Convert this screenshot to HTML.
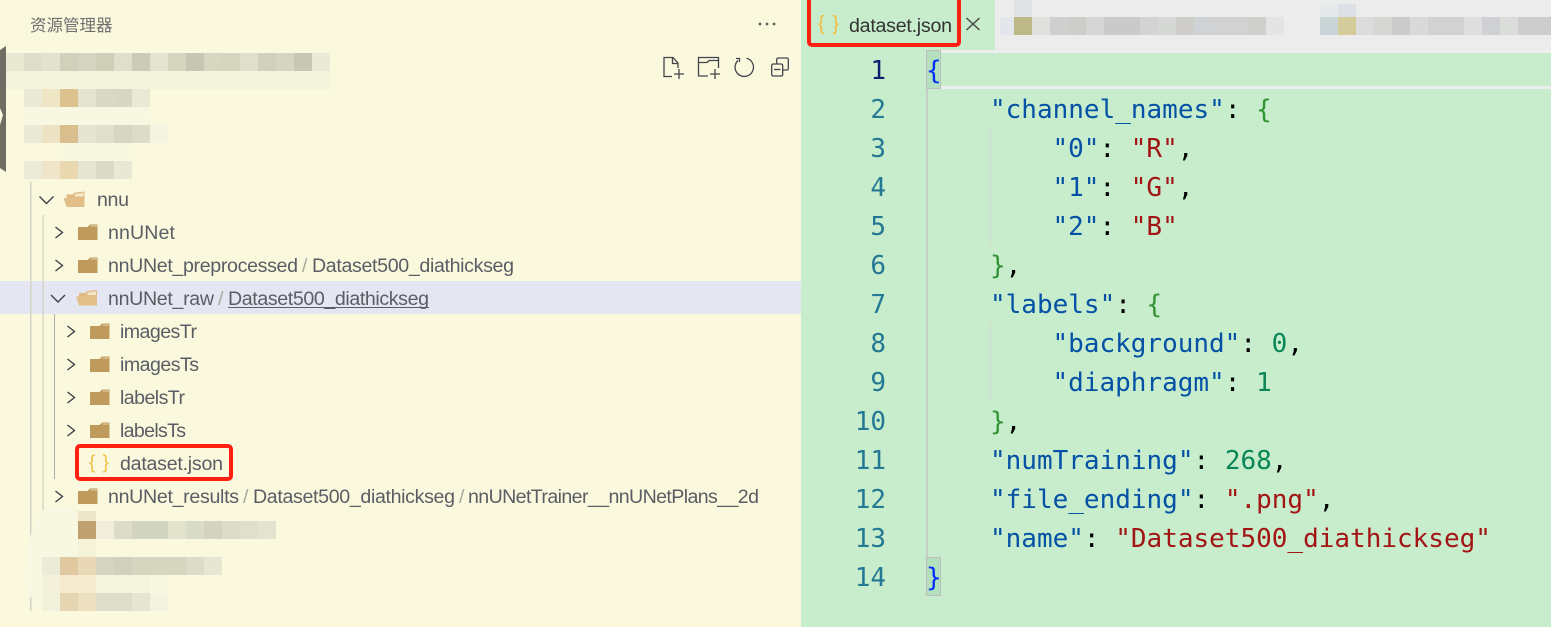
<!DOCTYPE html>
<html><head><meta charset="utf-8"><style>
html,body{margin:0;padding:0;background:#FAF9DE;width:1551px;height:627px;overflow:hidden}
svg{display:block}
.s{font-family:"Liberation Sans","Noto Sans CJK SC",sans-serif;font-size:19.6px;fill:#5a5e64}
.sl{fill:#a9a99c}
.m{font-family:"DejaVu Sans Mono","Liberation Mono",monospace;font-size:26px}
.k{fill:#0451a5}.v{fill:#a31515}.n{fill:#098658}.p{fill:#000}.g{fill:#319331}.b{fill:#0431fa}
.ln{fill:#237893;text-anchor:end}
</style></head><body>
<svg width="1551" height="627" viewBox="0 0 1551 627" xmlns="http://www.w3.org/2000/svg">
<defs>
<g id="fc"><path d="M0 3H9.5L12 0.5H19.5V16H0Z" fill="#bf9a5c"/><path d="M12.5 1.5H19V2.5H12.5Z" fill="#e6d3ae"/></g>
<g id="fo"><path d="M3 3H9L11.5 1L21 0V15.5H3Z" fill="#e0bc84"/><path d="M11.5 2.5L20 1.5V5H11.5Z" fill="#f4e8cc"/><path d="M0 6.5H21V15.5H3Z" fill="#e2bf88"/></g>
<path id="cr" d="M0 0L7 5.5L0 11" fill="none" stroke="#3d4148" stroke-width="1.4"/>
<path id="cd" d="M0 0L7 7L14 0" fill="none" stroke="#3d4148" stroke-width="1.4"/>
</defs>

<!-- sidebar -->
<rect width="801" height="627" fill="#FAF9DE"/>
<rect x="0" y="281" width="801" height="33" fill="#E4E6F1"/>
<text x="30" y="31" font-family="'Liberation Sans','Noto Sans CJK SC',sans-serif" font-size="16.5" fill="#6f6f6f">资源管理器</text>
<g fill="#5f5f5f"><circle cx="760" cy="24" r="1.4"/><circle cx="767" cy="24" r="1.4"/><circle cx="774" cy="24" r="1.4"/></g>

<!-- toolbar icons -->
<g fill="none" stroke="#42444c" stroke-width="1.3">
<path d="M672 76.5H664V57.5H673L678 63V68M672.5 57.5V63.5H678"/>
<path d="M679 69V79M674 74H684"/>
<path d="M708 76H698.5V57.5H718.5V68M698.5 62.5H707L709 60.5H718.5"/>
<path d="M715 69V79M710 74H720"/>
<path d="M738 60.5A9.2 9.2 0 1 0 746.5 58.3"/>
<path d="M736 58.5H739.5V62"/>
<rect x="771.7" y="64" width="11" height="12" rx="1.5"/>
<path d="M776.7 64V59.5A1.5 1.5 0 0 1 778.2 58H786.8A1.5 1.5 0 0 1 788.3 59.5V68.5A1.5 1.5 0 0 1 786.8 70H782.7"/>
<path d="M774 69.5H780.5"/>
</g>

<!-- mosaic top -->
<g>
<rect x="6" y="71" width="324" height="18" fill="#f4f3dd"/>
<rect x="6" y="53" width="18" height="18" fill="#e9e8d3"/><rect x="24" y="53" width="18" height="18" fill="#dedecb"/><rect x="42" y="53" width="18" height="18" fill="#e2e2cf"/><rect x="60" y="53" width="18" height="18" fill="#d1d0bb"/><rect x="78" y="53" width="18" height="18" fill="#d5d4c0"/><rect x="96" y="53" width="18" height="18" fill="#cfceb9"/><rect x="114" y="53" width="18" height="18" fill="#dfdfcc"/><rect x="132" y="53" width="18" height="18" fill="#cbcbb8"/><rect x="150" y="53" width="18" height="18" fill="#e3e3cf"/><rect x="168" y="53" width="18" height="18" fill="#d6d5c0"/><rect x="186" y="53" width="18" height="18" fill="#c5c6b4"/><rect x="204" y="53" width="18" height="18" fill="#d7d6c1"/><rect x="222" y="53" width="18" height="18" fill="#d4d4bf"/><rect x="240" y="53" width="18" height="18" fill="#e0dfcb"/><rect x="258" y="53" width="18" height="18" fill="#d0d0bc"/><rect x="276" y="53" width="18" height="18" fill="#d5d5c1"/><rect x="294" y="53" width="18" height="18" fill="#c8c7b5"/><rect x="312" y="53" width="18" height="18" fill="#ebead6"/>
<rect x="24" y="89" width="18" height="18" fill="#ebead6"/><rect x="42" y="89" width="18" height="18" fill="#efe6c5"/><rect x="60" y="89" width="18" height="18" fill="#dcc28f"/><rect x="78" y="89" width="18" height="18" fill="#e3e3cf"/><rect x="96" y="89" width="18" height="18" fill="#dad9c5"/><rect x="114" y="89" width="18" height="18" fill="#d8d7c3"/><rect x="132" y="89" width="18" height="18" fill="#e9e9d5"/>
<rect x="24" y="107" width="126" height="18" fill="#f8f7e1"/>
<rect x="24" y="125" width="18" height="18" fill="#ebead6"/><rect x="42" y="125" width="18" height="18" fill="#ede2c3"/><rect x="60" y="125" width="18" height="18" fill="#d9bf8e"/><rect x="78" y="125" width="18" height="18" fill="#e4e4d0"/><rect x="96" y="125" width="18" height="18" fill="#dfdfcb"/><rect x="114" y="125" width="18" height="18" fill="#d7d6c2"/><rect x="132" y="125" width="18" height="18" fill="#dddcc8"/><rect x="150" y="125" width="18" height="18" fill="#f5f4e1"/>
<rect x="60" y="143" width="72" height="18" fill="#f8f7e0"/>
<rect x="24" y="161" width="18" height="18" fill="#ecebd8"/><rect x="42" y="161" width="18" height="18" fill="#f0e5c9"/><rect x="60" y="161" width="18" height="18" fill="#ead9b0"/><rect x="78" y="161" width="18" height="18" fill="#e5e5d1"/><rect x="96" y="161" width="18" height="18" fill="#dbdac6"/><rect x="114" y="161" width="18" height="18" fill="#e8e9d5"/>
<path d="M0 50L6 46V172L0 168V125L3 115L0 108Z" fill="#6f6e64"/>
</g>

<!-- tree guides -->
<rect x="30" y="182" width="1.5" height="429" fill="#d4d4c4"/>
<rect x="42.5" y="215" width="1.2" height="305" fill="#cfcfc0"/>
<rect x="54" y="314" width="1" height="165" fill="#aeaea6"/>

<!-- mosaic bottom -->
<path d="M42 511Q60 505 78 510H96V521H276V539H96V557H222V575H168V611H60Q25 610 26 575Q27 530 42 511Z" fill="#f8f7e2"/>
<rect x="78" y="511" width="18" height="10" fill="#eee6c9"/>
<rect x="78" y="521" width="18" height="18" fill="#bfa070"/><rect x="96" y="521" width="18" height="18" fill="#f0eeda"/><rect x="114" y="521" width="18" height="18" fill="#dcdcc8"/><rect x="132" y="521" width="36" height="18" fill="#d0d4c0"/><rect x="168" y="521" width="18" height="18" fill="#e3e3cd"/><rect x="186" y="521" width="18" height="18" fill="#d9dcc8"/><rect x="204" y="521" width="18" height="18" fill="#d3d3bf"/><rect x="222" y="521" width="18" height="18" fill="#dcdcc8"/><rect x="240" y="521" width="18" height="18" fill="#dfdfcb"/><rect x="258" y="521" width="18" height="18" fill="#e3e3cf"/>
<rect x="78" y="539" width="18" height="18" fill="#f5f2da"/>
<rect x="42" y="557" width="18" height="18" fill="#ebebd7"/><rect x="60" y="557" width="18" height="18" fill="#e0c8a0"/><rect x="78" y="557" width="18" height="18" fill="#e8d8b5"/><rect x="96" y="557" width="18" height="18" fill="#d5d5c2"/><rect x="114" y="557" width="18" height="18" fill="#d0d0bc"/><rect x="132" y="557" width="54" height="18" fill="#d5d5c0"/><rect x="186" y="557" width="18" height="18" fill="#dcdcc8"/><rect x="204" y="557" width="18" height="18" fill="#e6e6d2"/>
<rect x="42" y="575" width="18" height="18" fill="#f3f1dc"/><rect x="60" y="575" width="36" height="18" fill="#f5ead0"/><rect x="96" y="575" width="54" height="18" fill="#f5f4df"/>
<rect x="42" y="593" width="18" height="18" fill="#f1f1dc"/><rect x="60" y="593" width="18" height="18" fill="#e5d5b0"/><rect x="78" y="593" width="18" height="18" fill="#ede0c0"/><rect x="96" y="593" width="36" height="18" fill="#ddddca"/><rect x="132" y="593" width="18" height="18" fill="#e5e5d1"/><rect x="150" y="593" width="18" height="18" fill="#f3f3df"/>

<!-- tree rows -->
<use href="#cd" x="39.5" y="196.5"/><use href="#fo" x="63.5" y="191.5"/>
<text class="s" x="97" y="206" textLength="32" lengthAdjust="spacing">nnu</text>

<use href="#cr" x="55.5" y="227"/><use href="#fc" x="78" y="224"/>
<text class="s" x="108" y="239" textLength="67" lengthAdjust="spacing">nnUNet</text>

<use href="#cr" x="55.5" y="260"/><use href="#fc" x="78" y="257"/>
<text class="s" x="108" y="272" textLength="190" lengthAdjust="spacing">nnUNet_preprocessed</text>
<text class="s sl" x="302" y="272">/</text>
<text class="s" x="312" y="272" textLength="202" lengthAdjust="spacing">Dataset500_diathickseg</text>

<use href="#cd" x="51" y="295"/><use href="#fo" x="76" y="290"/>
<text class="s" x="108" y="305" textLength="106" lengthAdjust="spacing">nnUNet_raw</text>
<text class="s sl" x="218" y="305">/</text>
<text class="s" x="228" y="305" textLength="201" lengthAdjust="spacing">Dataset500_diathickseg</text>
<rect x="228" y="307" width="201" height="1" fill="#5a5e64"/>

<use href="#cr" x="67.5" y="326"/><use href="#fc" x="90" y="323"/>
<text class="s" x="120" y="338" textLength="77" lengthAdjust="spacing">imagesTr</text>
<use href="#cr" x="67.5" y="359"/><use href="#fc" x="90" y="356"/>
<text class="s" x="120" y="371" textLength="79" lengthAdjust="spacing">imagesTs</text>
<use href="#cr" x="67.5" y="392"/><use href="#fc" x="90" y="389"/>
<text class="s" x="120" y="404" textLength="65" lengthAdjust="spacing">labelsTr</text>
<use href="#cr" x="67.5" y="425"/><use href="#fc" x="90" y="422"/>
<text class="s" x="120" y="437" textLength="66" lengthAdjust="spacing">labelsTs</text>

<text x="89" y="468.5" font-family="'Liberation Sans',sans-serif" font-size="19" fill="#f5bd3f" textLength="20" lengthAdjust="spacing">{ }</text>
<text class="s" x="120" y="470" textLength="103" lengthAdjust="spacing">dataset.json</text>
<rect x="77" y="446" width="154" height="33" rx="3" fill="none" stroke="#ff2012" stroke-width="4"/>

<use href="#cr" x="55.5" y="491"/><use href="#fc" x="78" y="488"/>
<text class="s" x="108" y="503" textLength="131" lengthAdjust="spacing">nnUNet_results</text>
<text class="s sl" x="243" y="503">/</text>
<text class="s" x="253" y="503" textLength="202" lengthAdjust="spacing">Dataset500_diathickseg</text>
<text class="s sl" x="459" y="503">/</text>
<text class="s" x="468" y="503" textLength="291" lengthAdjust="spacing">nnUNetTrainer__nnUNetPlans__2d</text>

<!-- editor -->
<rect x="801" y="0" width="750" height="627" fill="#C7EDCC"/>
<rect x="995" y="0" width="556" height="53" fill="#ececec"/>
<rect x="1014" y="0" width="18" height="17" fill="#dfe3e6"/>
<rect x="1320" y="4" width="18" height="13" fill="#e6e9ea"/><rect x="1338" y="4" width="18" height="13" fill="#dde1e5"/>
<rect x="1000" y="17" width="14" height="18" fill="#e3e6ea"/><rect x="1014" y="17" width="18" height="18" fill="#bcb888"/><rect x="1032" y="17" width="18" height="18" fill="#e0e0dc"/><rect x="1050" y="17" width="18" height="18" fill="#cfcfcf"/><rect x="1068" y="17" width="18" height="18" fill="#cdcdca"/><rect x="1086" y="17" width="18" height="18" fill="#d6d6d6"/><rect x="1104" y="17" width="36" height="18" fill="#cacaca"/><rect x="1140" y="17" width="18" height="18" fill="#d3d3d3"/><rect x="1158" y="17" width="18" height="18" fill="#d6d8d6"/><rect x="1176" y="17" width="18" height="18" fill="#cfcdca"/><rect x="1194" y="17" width="18" height="18" fill="#d0d3d6"/><rect x="1212" y="17" width="36" height="18" fill="#d2d2d2"/><rect x="1248" y="17" width="18" height="18" fill="#cfcfcc"/><rect x="1266" y="17" width="18" height="18" fill="#e4e4e4"/>
<rect x="1320" y="17" width="18" height="18" fill="#c8d4d6"/><rect x="1338" y="17" width="18" height="18" fill="#d5cc9c"/><rect x="1356" y="17" width="18" height="18" fill="#dcdcdc"/><rect x="1374" y="17" width="18" height="18" fill="#d6d6d3"/><rect x="1392" y="17" width="18" height="18" fill="#cbcbcb"/><rect x="1410" y="17" width="18" height="18" fill="#d9d9d9"/><rect x="1428" y="17" width="36" height="18" fill="#d2d2d2"/><rect x="1464" y="17" width="18" height="18" fill="#dedede"/><rect x="1482" y="17" width="18" height="18" fill="#cfd0d4"/><rect x="1500" y="17" width="18" height="18" fill="#dbdddb"/><rect x="1518" y="17" width="33" height="18" fill="#cdcdcd"/>

<text x="818" y="30" font-family="'Liberation Sans',sans-serif" font-size="20" fill="#f5bd3f" textLength="21" lengthAdjust="spacing">{ }</text>
<text x="849" y="32" font-family="'Liberation Sans',sans-serif" font-size="19.6" fill="#333" textLength="103" lengthAdjust="spacing">dataset.json</text>
<path d="M966.5 18L979.5 30M979.5 18L966.5 30" stroke="#444" stroke-width="1.4" fill="none"/>
<rect x="809" y="-4" width="150" height="49" rx="3" fill="none" stroke="#ff2012" stroke-width="4"/>

<!-- current line -->
<rect x="941" y="50" width="610" height="3" fill="#eeeeee"/>
<rect x="941" y="86" width="610" height="3" fill="#eeeeee"/>
<!-- guides -->
<rect x="926" y="89" width="2" height="468" fill="#c4d0c4"/>
<rect x="989.5" y="128" width="1.5" height="117" fill="#d2dcd0"/>
<rect x="989.5" y="323" width="1.5" height="78" fill="#d2dcd0"/>
<!-- bracket boxes -->
<rect x="926.5" y="50.5" width="14" height="38" fill="#b5e0bd" stroke="#bdbdbd"/>
<rect x="926.5" y="557.5" width="14" height="38" fill="#b5e0bd" stroke="#bdbdbd"/>

<!-- line numbers -->
<g class="m">
<text class="ln" x="886" y="79" style="fill:#0b216f">1</text>
<text class="ln" x="886" y="118">2</text>
<text class="ln" x="886" y="157">3</text>
<text class="ln" x="886" y="196">4</text>
<text class="ln" x="886" y="235">5</text>
<text class="ln" x="886" y="274">6</text>
<text class="ln" x="886" y="313">7</text>
<text class="ln" x="886" y="352">8</text>
<text class="ln" x="886" y="391">9</text>
<text class="ln" x="886" y="430">10</text>
<text class="ln" x="886" y="469">11</text>
<text class="ln" x="886" y="508">12</text>
<text class="ln" x="886" y="547">13</text>
<text class="ln" x="886" y="586">14</text>

<!-- code -->
<text x="926" y="79" class="b">{</text>
<text x="990" y="118" xml:space="preserve"><tspan class="k">"channel_names"</tspan><tspan class="p">: </tspan><tspan class="g">{</tspan></text>
<text x="1052.5" y="157" xml:space="preserve"><tspan class="k">"0"</tspan><tspan class="p">: </tspan><tspan class="v">"R"</tspan><tspan class="p">,</tspan></text>
<text x="1052.5" y="196" xml:space="preserve"><tspan class="k">"1"</tspan><tspan class="p">: </tspan><tspan class="v">"G"</tspan><tspan class="p">,</tspan></text>
<text x="1052.5" y="235" xml:space="preserve"><tspan class="k">"2"</tspan><tspan class="p">: </tspan><tspan class="v">"B"</tspan></text>
<text x="990" y="274" xml:space="preserve"><tspan class="g">}</tspan><tspan class="p">,</tspan></text>
<text x="990" y="313" xml:space="preserve"><tspan class="k">"labels"</tspan><tspan class="p">: </tspan><tspan class="g">{</tspan></text>
<text x="1052.5" y="352" xml:space="preserve"><tspan class="k">"background"</tspan><tspan class="p">: </tspan><tspan class="n">0</tspan><tspan class="p">,</tspan></text>
<text x="1052.5" y="391" xml:space="preserve"><tspan class="k">"diaphragm"</tspan><tspan class="p">: </tspan><tspan class="n">1</tspan></text>
<text x="990" y="430" xml:space="preserve"><tspan class="g">}</tspan><tspan class="p">,</tspan></text>
<text x="990" y="469" xml:space="preserve"><tspan class="k">"numTraining"</tspan><tspan class="p">: </tspan><tspan class="n">268</tspan><tspan class="p">,</tspan></text>
<text x="990" y="508" xml:space="preserve"><tspan class="k">"file_ending"</tspan><tspan class="p">: </tspan><tspan class="v">".png"</tspan><tspan class="p">,</tspan></text>
<text x="990" y="547" xml:space="preserve"><tspan class="k">"name"</tspan><tspan class="p">: </tspan><tspan class="v">"Dataset500_diathickseg"</tspan></text>
<text x="926" y="586" class="b">}</text>
</g>
</svg>
</body></html>
